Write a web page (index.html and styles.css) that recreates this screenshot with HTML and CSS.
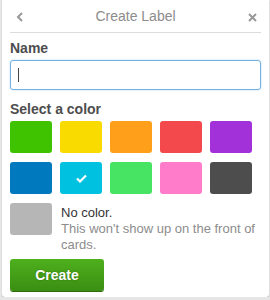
FILE: index.html
```html
<!DOCTYPE html>
<html lang="en">
<head>
  <meta charset="UTF-8">
  <title>Create Label</title>
  <link rel="stylesheet" href="styles.css">
</head>
<body>

  <div class="popover">
    <div class="pop-header">
      <button class="icon-btn" title="Back">
        <svg width="7" height="10" viewBox="0 0 7 10"><path d="M6 1 L2 5 L6 9" fill="none" stroke="#999" stroke-width="2"/></svg>
      </button>
      <span class="pop-title">Create Label</span>
      <button class="icon-btn" title="Close">
        <svg width="9" height="9" viewBox="0 0 9 9"><path d="M1 1 L8 8 M8 1 L1 8" fill="none" stroke="#999" stroke-width="2"/></svg>
      </button>
    </div>

    <div class="pop-content">
      <label class="field-label" for="label-name">Name</label>
      <div class="text-field">
        <span class="caret"></span>
        <input type="text" id="label-name">
      </div>

      <div class="field-label">Select a color</div>
      <div class="palette">
        <span class="swatch green"></span>
        <span class="swatch yellow"></span>
        <span class="swatch orange"></span>
        <span class="swatch red"></span>
        <span class="swatch purple"></span>
        <span class="swatch blue"></span>
        <span class="swatch sky selected">
          <svg width="11" height="9" viewBox="0 0 11 9"><path d="M1 4.5 L4 7.5 L10 1.5" fill="none" stroke="#fff" stroke-width="2.2"/></svg>
        </span>
        <span class="swatch lime"></span>
        <span class="swatch pink"></span>
        <span class="swatch black"></span>
      </div>

      <div class="no-color">
        <span class="swatch none"></span>
        <div class="no-color-text">
          <div>No color.</div>
          <div class="muted">This won't show up on the front of cards.</div>
        </div>
      </div>

      <button class="create-btn">Create</button>
    </div>
  </div>

</body>
</html>
```

FILE: styles.css
```css
body {
  margin: 0;
  font-family: 'Liberation Sans', Arial, sans-serif;
  background-color: #e6e6e6;
  color: #333;
}

.popover {
  margin: 0 1px 0 2px;
  background-color: #fff;
  border-radius: 0 0 3px 3px;
  box-shadow: 0 1px 1px rgba(0, 0, 0, 0.25);
  padding-bottom: 6px;
}

.pop-header {
  margin: 0 8px;
  height: 32px;
  border-bottom: 1px solid #dcdcdc;
  display: flex;
  align-items: center;
  justify-content: space-between;
}

.icon-btn {
  background: none;
  border: none;
  padding: 0;
  display: flex;
  align-items: center;
  margin-top: 2px;
}

.icon-btn:first-child {
  margin-left: 6px;
}

.icon-btn:last-child {
  margin-right: 4px;
}

.pop-title {
  font-size: 14px;
  color: #8c8c8c;
}

.pop-content {
  padding: 0 8px;
}

.field-label {
  display: block;
  font-weight: bold;
  font-size: 14px;
  line-height: 18px;
  margin-top: 6px;
  color: #4d4d4d;
}

.text-field {
  margin-top: 3px;
  height: 28px;
  border: 1px solid #72b1e0;
  border-radius: 3px;
  box-shadow: 0 0 2px #a9d2f0;
  display: flex;
  align-items: center;
  padding-left: 7px;
}

.caret {
  width: 1px;
  height: 14px;
  background-color: #444;
}

.text-field input {
  flex: 1;
  border: none;
  outline: none;
  background: none;
  font-size: 14px;
  padding: 0;
}

.text-field + .field-label {
  margin-top: 10px;
}

.palette {
  display: grid;
  grid-template-columns: repeat(5, 42px);
  column-gap: 8px;
  row-gap: 9px;
  margin-top: 3px;
}

.swatch {
  display: flex;
  align-items: center;
  justify-content: center;
  width: 42px;
  height: 32px;
  border-radius: 3px;
}

.green { background-color: #3fc300; }
.yellow { background-color: #fadb00; }
.orange { background-color: #ff9f1a; }
.red { background-color: #f3484c; }
.purple { background-color: #a231d9; }
.blue { background-color: #0079bf; }
.sky { background-color: #00c2e0; }
.lime { background-color: #46e462; }
.pink { background-color: #ff7ccb; }
.black { background-color: #4d4d4d; }
.none { background-color: #b6b6b6; flex-shrink: 0; }

.no-color {
  display: flex;
  gap: 9px;
  margin-top: 9px;
}

.no-color-text {
  font-size: 13px;
  line-height: 16px;
  padding-top: 2px;
}

.muted {
  color: #8c8c8c;
}

.create-btn {
  margin-top: 6px;
  width: 94px;
  height: 32px;
  border: none;
  border-radius: 3px;
  background: linear-gradient(to bottom, #4eb01d, #3b8e12);
  box-shadow: 0 1px 0 #2f6c0e;
  color: #fff;
  font-family: 'Liberation Sans', Arial, sans-serif;
  font-weight: bold;
  font-size: 14px;
  text-shadow: 0 0 2px rgba(0, 0, 0, 0.3);
}
```
